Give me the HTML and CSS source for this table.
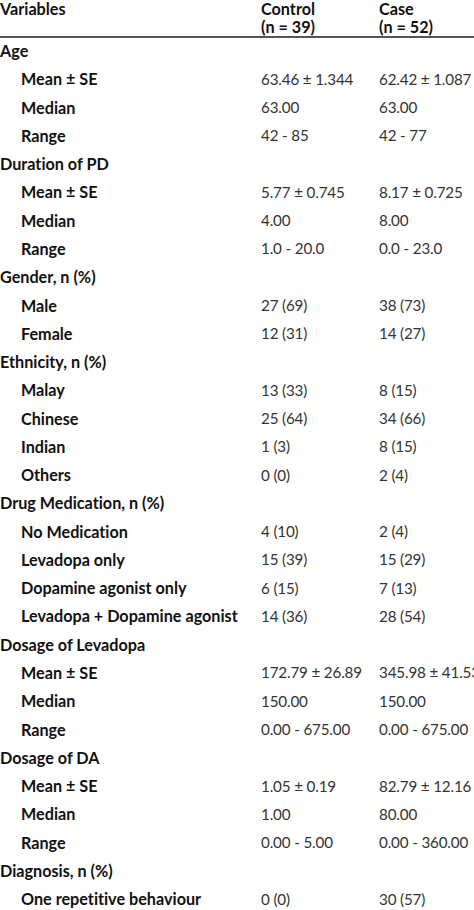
FILE: index.html
```html
<!DOCTYPE html>
<html>
<head>
<meta charset="utf-8">
<link rel="stylesheet" href="styles.css">
</head>
<body>
<div class="table">
  <div class="head">
    <div class="hcell">Variables</div>
    <div class="hcell">Control<br>(n = 39)</div>
    <div class="hcell">Case<br>(n = 52)</div>
  </div>
  <div class="row sec"><div class="lab">Age</div><div></div><div></div></div>
  <div class="row"><div class="lab sub">Mean ± SE</div><div class="val">63.46 ± 1.344</div><div class="val">62.42 ± 1.087</div></div>
  <div class="row"><div class="lab sub">Median</div><div class="val">63.00</div><div class="val">63.00</div></div>
  <div class="row"><div class="lab sub">Range</div><div class="val">42 - 85</div><div class="val">42 - 77</div></div>
  <div class="row sec"><div class="lab">Duration of PD</div><div></div><div></div></div>
  <div class="row"><div class="lab sub">Mean ± SE</div><div class="val">5.77 ± 0.745</div><div class="val">8.17 ± 0.725</div></div>
  <div class="row"><div class="lab sub">Median</div><div class="val">4.00</div><div class="val">8.00</div></div>
  <div class="row"><div class="lab sub">Range</div><div class="val">1.0 - 20.0</div><div class="val">0.0 - 23.0</div></div>
  <div class="row sec"><div class="lab">Gender, n (%)</div><div></div><div></div></div>
  <div class="row"><div class="lab sub">Male</div><div class="val">27 (69)</div><div class="val">38 (73)</div></div>
  <div class="row"><div class="lab sub">Female</div><div class="val">12 (31)</div><div class="val">14 (27)</div></div>
  <div class="row sec"><div class="lab">Ethnicity, n (%)</div><div></div><div></div></div>
  <div class="row"><div class="lab sub">Malay</div><div class="val">13 (33)</div><div class="val">8 (15)</div></div>
  <div class="row"><div class="lab sub">Chinese</div><div class="val">25 (64)</div><div class="val">34 (66)</div></div>
  <div class="row"><div class="lab sub">Indian</div><div class="val">1 (3)</div><div class="val">8 (15)</div></div>
  <div class="row"><div class="lab sub">Others</div><div class="val">0 (0)</div><div class="val">2 (4)</div></div>
  <div class="row sec"><div class="lab">Drug Medication, n (%)</div><div></div><div></div></div>
  <div class="row"><div class="lab sub">No Medication</div><div class="val">4 (10)</div><div class="val">2 (4)</div></div>
  <div class="row"><div class="lab sub">Levadopa only</div><div class="val">15 (39)</div><div class="val">15 (29)</div></div>
  <div class="row"><div class="lab sub">Dopamine agonist only</div><div class="val">6 (15)</div><div class="val">7 (13)</div></div>
  <div class="row"><div class="lab sub">Levadopa + Dopamine agonist</div><div class="val">14 (36)</div><div class="val">28 (54)</div></div>
  <div class="row sec"><div class="lab">Dosage of Levadopa</div><div></div><div></div></div>
  <div class="row"><div class="lab sub">Mean ± SE</div><div class="val">172.79 ± 26.89</div><div class="val">345.98 ± 41.53</div></div>
  <div class="row"><div class="lab sub">Median</div><div class="val">150.00</div><div class="val">150.00</div></div>
  <div class="row"><div class="lab sub">Range</div><div class="val">0.00 - 675.00</div><div class="val">0.00 - 675.00</div></div>
  <div class="row sec"><div class="lab">Dosage of DA</div><div></div><div></div></div>
  <div class="row"><div class="lab sub">Mean ± SE</div><div class="val">1.05 ± 0.19</div><div class="val">82.79 ± 12.16</div></div>
  <div class="row"><div class="lab sub">Median</div><div class="val">1.00</div><div class="val">80.00</div></div>
  <div class="row"><div class="lab sub">Range</div><div class="val">0.00 - 5.00</div><div class="val">0.00 - 360.00</div></div>
  <div class="row sec"><div class="lab">Diagnosis, n (%)</div><div></div><div></div></div>
  <div class="row"><div class="lab sub">One repetitive behaviour</div><div class="val">0 (0)</div><div class="val">30 (57)</div></div>
</div>
</body>
</html>
```
FILE: styles.css
```css
html, body {
  margin: 0;
  padding: 0;
  background: #fff;
  overflow: hidden;
}
body {
  font-family: Lato, "Open Sans", sans-serif;
  font-size: 16.2px;
  font-variant-ligatures: none;
  color: #111;
}
.table {
  width: 474px;
}
.head {
  display: grid;
  grid-template-columns: 261px 118px 1fr;
  height: 36px;
  border-bottom: 2px solid #555;
  line-height: 17.5px;
  font-weight: 700;
}
.head .hcell {
  white-space: nowrap;
}
.row {
  display: grid;
  grid-template-columns: 261px 118px 1fr;
  height: 28.27px;
  box-sizing: border-box;
  padding-bottom: 3px;
  align-items: center;
  white-space: nowrap;
}
.lab {
  font-weight: 700;
  color: #111;
}
.lab.sub {
  padding-left: 21px;
}
.val {
  font-weight: 400;
  font-size: 15.2px;
  letter-spacing: -0.15px;
  color: #333;
}
```
